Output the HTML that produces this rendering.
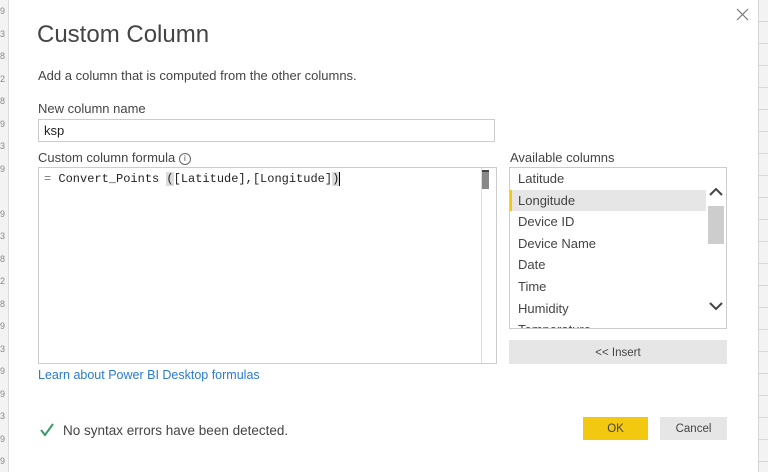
<!DOCTYPE html>
<html><head><style>
body{margin:0;width:768px;height:472px;overflow:hidden;background:#fff;font-family:"Liberation Sans",sans-serif;position:relative;color:#333}
.a{position:absolute}
.l{font-size:13px;color:#444}
</style></head><body>
<div class="a" style="left:0;top:0;width:8px;height:472px;background:#f3f3f3;border-right:1px solid #ddd"></div>
<div class="a" style="left:0;top:0;width:8px;height:472px;font-size:9px;color:#888;line-height:22.5px;overflow:hidden">9<br>3<br>8<br>2<br>8<br>9<br>3<br>9<br>&nbsp;<br>9<br>3<br>8<br>2<br>8<br>9<br>3<br>9<br>9<br>3<br>9<br>9</div>
<div class="a" style="left:758px;top:0;width:10px;height:472px;background:#f3f3f3;border-left:1px solid #d5d5d5;background-image:repeating-linear-gradient(#f3f3f3 0 21px,#d8d8d8 21px 22px)"></div>
<svg class="a" style="left:736px;top:8px" width="13" height="13"><path d="M1 1L12 12M12 1L1 12" stroke="#777" stroke-width="1.2"/></svg>
<div class="a" style="left:37px;top:21px;font-size:24px;color:#444">Custom Column</div>
<div class="a l" style="left:38px;top:68px">Add a column that is computed from the other columns.</div>
<div class="a l" style="left:38px;top:101px">New column name</div>
<div class="a" style="left:38px;top:119px;width:457px;border:1px solid #ccc;font-size:13px;line-height:21px;box-sizing:border-box;padding-left:5px;height:23px;color:#222">ksp</div>
<div class="a l" style="left:38px;top:150px">Custom column formula <span style="display:inline-block;width:10px;height:10px;border:1px solid #666;border-radius:50%;font-size:8px;text-align:center;line-height:10px;vertical-align:middle">i</span></div>
<div class="a" style="left:38px;top:167px;width:459px;height:197px;border:1px solid #ccc;box-sizing:border-box"></div>
<div class="a" style="left:481px;top:168px;width:1px;height:195px;background:#ddd"></div>
<div class="a" style="left:482px;top:170px;width:7px;height:17px;background:#888;border-top:2px solid #444"></div>
<div class="a" style="left:44px;top:172px;font-family:'Liberation Mono',monospace;font-size:12px;color:#222"><span style="color:#777">=</span> Convert_Points <span style="background:#ddd">(</span>[Latitude],[Longitude]<span style="background:#ddd">)</span><span style="border-left:1px solid #000"></span></div>
<div class="a l" style="left:510px;top:150px">Available columns</div>
<div class="a" style="left:509px;top:167px;width:218px;height:162px;border:1px solid #ccc;box-sizing:border-box;overflow:hidden">
<div style="font-size:13px;color:#444;line-height:21.6px;padding-top:0">
<div style="padding-left:8px">Latitude</div>
<div style="padding-left:6px;background:#e6e6e6;border-left:2px solid #f2c811;margin-right:20px">Longitude</div>
<div style="padding-left:8px">Device ID</div>
<div style="padding-left:8px">Device Name</div>
<div style="padding-left:8px">Date</div>
<div style="padding-left:8px">Time</div>
<div style="padding-left:8px">Humidity</div>
<div style="padding-left:8px">Temperature</div></div>
<div class="a" style="right:0;top:0;width:20px;height:160px;background:#fff"></div>
<div class="a" style="right:2px;top:38px;width:16px;height:38px;background:#cdcdcd"></div>
<svg class="a" style="right:3px;top:19px" width="14" height="10"><path d="M1 8L7 2L13 8" stroke="#444" stroke-width="2" fill="none"/></svg>
<svg class="a" style="right:3px;top:133px" width="14" height="10"><path d="M1 2L7 8L13 2" stroke="#444" stroke-width="2" fill="none"/></svg>
</div>
<div class="a" style="left:509px;top:340px;width:218px;height:24px;background:#e6e6e6;font-size:11.5px;color:#444;text-align:center;line-height:27px">&lt;&lt; Insert</div>
<div class="a" style="left:38px;top:368px;font-size:12.5px;color:#2a7ad3">Learn about Power BI Desktop formulas</div>
<svg class="a" style="left:39px;top:422px" width="16" height="16"><path d="M2 8L6 13L14 2" stroke="#3a9a6a" stroke-width="2" fill="none"/></svg>
<div class="a" style="left:63px;top:423px;font-size:13.5px;color:#444">No syntax errors have been detected.</div>
<div class="a" style="left:583px;top:417px;width:65px;height:23px;background:#f2c811;font-size:11.5px;text-align:center;line-height:25px;color:#444">OK</div>
<div class="a" style="left:660px;top:417px;width:67px;height:23px;background:#e6e6e6;font-size:11.5px;text-align:center;line-height:25px;color:#444">Cancel</div>
</body></html>
